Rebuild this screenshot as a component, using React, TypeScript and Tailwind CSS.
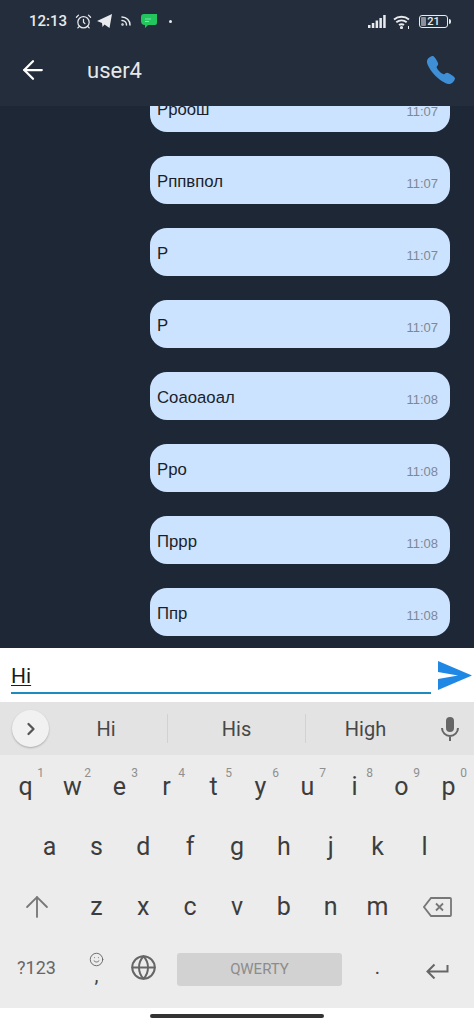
import { ArrowLeft, ChevronRight, Globe, ArrowUp, Smile, AlarmClock, Rss } from 'lucide-react';
import { IoCall } from 'react-icons/io5';

const messages = [
  { text: 'Рроош', time: '11:07' },
  { text: 'Рппвпол', time: '11:07' },
  { text: 'Р', time: '11:07' },
  { text: 'Р', time: '11:07' },
  { text: 'Соаоаоал', time: '11:08' },
  { text: 'Рро', time: '11:08' },
  { text: 'Пррр', time: '11:08' },
  { text: 'Ппр', time: '11:08' },
];

const topRow = [
  ['q', '1'], ['w', '2'], ['e', '3'], ['r', '4'], ['t', '5'],
  ['y', '6'], ['u', '7'], ['i', '8'], ['o', '9'], ['p', '0'],
];

function StatusBar() {
  return (
    <div className="h-[42px] pl-[29px] pr-[26px] flex items-center justify-between text-[#e8eaed]">
      <div className="flex items-center">
        <span className="text-[15px] font-medium w-[46px]">12:13</span>
        <AlarmClock className="w-[17px] h-[17px]" strokeWidth={1.75} />
        <svg className="w-[15px] h-[14px] ml-[5px]" viewBox="0 0 15 14">
          <path d="M0 7 15 0 12.5 14 7.5 10.5 5.5 13 5 9Z" fill="#e8eaed" />
        </svg>
        <Rss className="w-[12px] h-[12px] ml-[8px]" strokeWidth={3} />
        <svg className="w-[17px] h-[16px] ml-[8px]" viewBox="0 0 17 16">
          <path d="M4 1h13v9a2 2 0 0 1-2 2H8l-3 3v-3a4 4 0 0 1-4-4V4a3 3 0 0 1 3-3Z" fill="#22c55e" />
          <path d="M5 6h6M5 8.500h4" stroke="#7ee2a0" strokeWidth="1" />
        </svg>
        <span className="w-[3px] h-[3px] rounded-full bg-[#e8eaed] ml-[12px]" />
      </div>
      <div className="flex items-center">
        <svg className="w-[18px] h-[13px]" viewBox="0 0 18 13" fill="#e8eaed">
          <rect x="0" y="10" width="2.500" height="3" />
          <rect x="3.800" y="8" width="2.500" height="5" />
          <rect x="7.600" y="5.500" width="2.500" height="7.500" />
          <rect x="11.400" y="3" width="2.500" height="10" />
          <rect x="15.200" y="0" width="2.500" height="13" />
        </svg>
        <svg className="w-[19px] h-[15px] ml-[7px]" viewBox="0 0 19 15" fill="none" stroke="#e8eaed" strokeWidth="2">
          <path d="M1 5.500a12 12 0 0 1 15 0" />
          <path d="M3.300 8.300a8.500 8.500 0 0 1 10.400 0" />
          <path d="M6 11a4.500 4.500 0 0 1 5 0" />
          <circle cx="8.500" cy="13.500" r="0.600" fill="#e8eaed" />
          <path d="M15.500 12v3" strokeWidth="1" />
        </svg>
        <div className="relative ml-[7px] w-[29px] h-[13px] border border-[#e8eaed] rounded-[3px] flex items-center justify-center text-[11px] font-medium leading-none">
          <div className="absolute left-[1px] top-[1px] bottom-[1px] w-[5px] bg-[#8a919b] rounded-[1px]" />
          <span className="relative">21</span>
          <div className="absolute -right-[4px] top-[3px] w-[2px] h-[5px] bg-[#e8eaed] rounded-r-sm" />
        </div>
      </div>
    </div>
  );
}

function Bubble({ text, time }: { text: string; time: string }) {
  return (
    <div className="shrink-0 h-12 w-[300px] rounded-[17px] bg-[#cce3ff] pl-[7px] pr-[12px] flex justify-between font-['Liberation_Sans',sans-serif]">
      <span className="text-[16.75px] leading-[18px] pt-[17px] text-[#1a1f29]">{text}</span>
      <span className="text-[13px] leading-[16px] pt-[20px] text-[#7d8895]">{time}</span>
    </div>
  );
}

function Key({ label, hint }: { label: string; hint?: string }) {
  return (
    <div className="relative flex-1 h-full flex items-center justify-center text-[25px] text-[#3d3d3d]">
      {label}
      {hint && <span className="absolute top-[10px] right-[5px] text-[12px] leading-none text-[#8f8f8f]">{hint}</span>}
    </div>
  );
}

export default function App() {
  return (
    <div className="h-[1027px] w-[474px] flex flex-col overflow-hidden bg-white font-['Roboto',sans-serif]">
      <div className="h-[106px] shrink-0 bg-[#242d3b]">
        <StatusBar />
        <div className="h-[56px] pl-[18px] pr-[17px] flex items-center">
          <ArrowLeft className="w-[30px] h-[30px] text-white" strokeWidth={1.8} />
          <span className="ml-[39px] text-[22px] text-[#e6e8eb]">user4</span>
          <IoCall className="ml-auto w-[32px] h-[32px] text-[#3f8fd6]" />
        </div>
      </div>

      <div className="h-[542px] shrink-0 bg-[#1e2735] overflow-hidden flex flex-col justify-end gap-6 pb-3 pl-[150px]">
        {messages.map((m, i) => (
          <Bubble key={i} text={m.text} time={m.time} />
        ))}
      </div>

      <div className="h-[54px] shrink-0 bg-white pl-[11px] flex items-start">
        <div className="w-[420px] h-[46px] border-b-2 border-[#1f8ac0] flex items-end pb-[3px]">
          <span className="text-[21px] leading-[26px] underline underline-offset-2 decoration-1 text-[#1c1c1c]">Hi</span>
        </div>
        <svg className="ml-[7px] mt-[13px] w-[34px] h-[29px]" viewBox="0 0 34 29">
          <path d="M0 0 34 14.500 0 29 0 18 20 14.500 0 11Z" fill="#1f88e5" />
        </svg>
      </div>

      <div className="h-[53px] shrink-0 bg-[#e3e3e3] flex items-center pl-[12px] pr-[15px] text-[20px] text-[#474747]">
        <div className="w-[37px] h-[37px] rounded-full bg-[#f1f1f1] shadow-[0_1px_2px_rgba(0,0,0,0.25)] flex items-center justify-center">
          <ChevronRight className="w-[20px] h-[20px] text-[#555]" strokeWidth={2.75} />
        </div>
        <div className="w-[118px] pr-[4px] text-center">Hi</div>
        <div className="w-px h-[29px] bg-[#d2d2d2]" />
        <div className="w-[137px] text-center">His</div>
        <div className="w-px h-[29px] bg-[#d2d2d2]" />
        <div className="w-[122px] pr-[3px] text-center">High</div>
        <svg className="ml-auto w-[18px] h-[24px]" viewBox="0 0 18 24" fill="none" stroke="#666" strokeWidth="2">
          <rect x="5" y="0" width="8" height="15" rx="4" fill="#666" stroke="none" />
          <path d="M1 11a8 8 0 0 0 16 0M9 19v5" />
        </svg>
      </div>

      <div className="h-[253px] shrink-0 bg-[#ececec] flex flex-col">
        <div className="h-[60px] mt-[2px] px-[2px] flex">
          {topRow.map(([k, n]) => (
            <Key key={k} label={k} hint={n} />
          ))}
        </div>
        <div className="h-[60px] flex px-[26px]">
          {'asdfghjkl'.split('').map((k) => (
            <Key key={k} label={k} />
          ))}
        </div>
        <div className="h-[60px] flex items-center">
          <div className="w-[73px] flex justify-center text-[#777]">
            <ArrowUp className="w-[34px] h-[34px]" strokeWidth={1.3} />
          </div>
          <div className="flex-1 h-full flex">
            {'zxcvbnm'.split('').map((k) => (
              <Key key={k} label={k} />
            ))}
          </div>
          <div className="w-[73px] flex justify-center">
            <svg className="w-[29px] h-[20px]" viewBox="0 0 29 20" fill="none" stroke="#777" strokeWidth="1.800">
              <path d="M8 1H27a1 1 0 0 1 1 1V18a1 1 0 0 1-1 1H8L1 10Z" />
              <path d="M13 6.500l7 7M20 6.500l-7 7" />
            </svg>
          </div>
        </div>
        <div className="h-[60px] flex items-center text-[#666]">
          <div className="w-[73px] text-center text-[18px]">?123</div>
          <div className="w-[47px] flex flex-col items-center leading-none">
            <Smile className="w-[15px] h-[15px]" strokeWidth={1.5} />
            <span className="text-[20px] leading-[16px] text-[#444]">,</span>
          </div>
          <div className="w-[47px] flex justify-center">
            <Globe className="w-[27px] h-[27px]" strokeWidth={1.75} />
          </div>
          <div className="w-[165px] h-[33px] ml-[10px] mt-[5px] rounded-[3px] bg-[#d2d2d2] flex items-center justify-center text-[15px] text-[#8c8c8c]">
            QWERTY
          </div>
          <div className="flex-1 pl-[12px] text-center text-[20px] text-[#444]">.</div>
          <div className="w-[73px] mt-[5px] flex justify-center">
            <svg className="w-[23px] h-[18px]" viewBox="0 0 23 18" fill="none" stroke="#666" strokeWidth="2">
              <path d="M1.500 10.500H21.500V4M8.500 3.500l-7 7 7 7" />
            </svg>
          </div>
        </div>
      </div>

      <div className="flex-1 bg-white flex justify-center pt-[6px]">
        <div className="w-[174px] h-[4px] rounded-full bg-[#333]" />
      </div>
    </div>
  );
}
